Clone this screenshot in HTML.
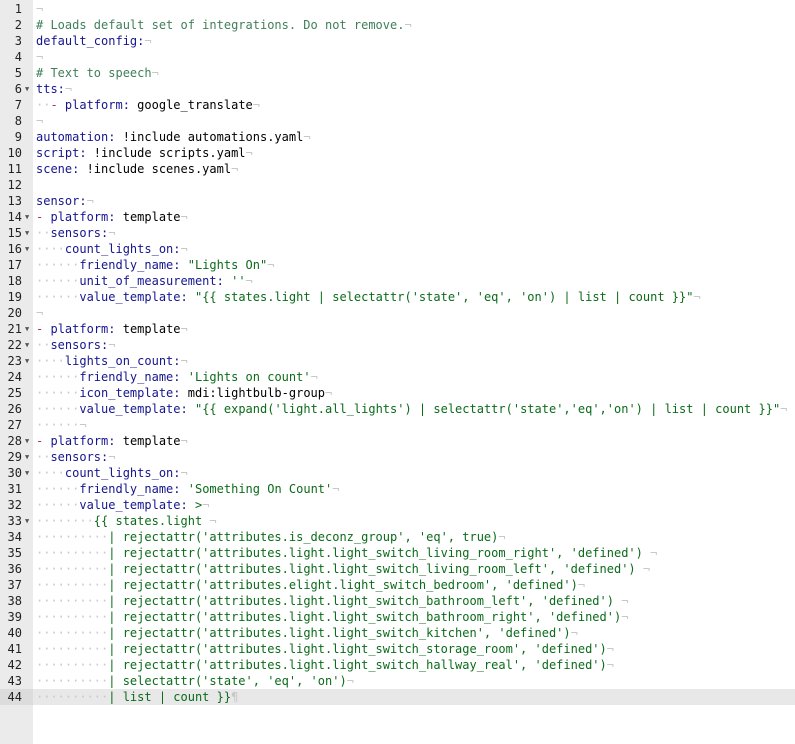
<!DOCTYPE html>
<html><head><meta charset="utf-8"><style>
body{margin:0;width:795px;height:744px;background:#fff;overflow:hidden;position:relative;font-family:"DejaVu Sans Mono",monospace;font-size:12px}
#g{position:absolute;left:0;top:0;width:33px;height:744px;background:#ebebeb}
.ln{position:absolute;left:0;width:33px;height:16px;line-height:16px;color:#222;font:12px/16px "DejaVu Sans Mono",monospace}
.ln span{position:absolute;right:11px}
.ln i{position:absolute;left:25px;top:0;font-style:normal;font-size:7px;color:#555}
#act{position:absolute;left:0;top:689px;width:795px;height:16px;background:#e8e8e8}
#actg{position:absolute;left:0;top:689px;width:33px;height:16px;background:#dcdcdc}
pre{position:absolute;left:36px;top:1px;margin:0;font:12px/16px "DejaVu Sans Mono",monospace;color:#000}
.k{color:#15158f}.c{color:#3f7f5a}.s{color:#0b6b1a}.m{color:#c0207a}.d{color:#c8c8c8}
</style></head><body>
<div id="g"></div><div id="act"></div><div id="actg"></div>
<pre><span class="d">¬</span>
<span class="c"># Loads default set of integrations. Do not remove.</span><span class="d">¬</span>
<span class="k">default_config:</span><span class="d">¬</span>
<span class="d">¬</span>
<span class="c"># Text to speech</span><span class="d">¬</span>
<span class="k">tts:</span><span class="d">¬</span>
<span class="d">··</span><span class="m">-</span> <span class="k">platform:</span> google_translate<span class="d">¬</span>
<span class="d">¬</span>
<span class="k">automation:</span> !include automations.yaml<span class="d">¬</span>
<span class="k">script:</span> !include scripts.yaml<span class="d">¬</span>
<span class="k">scene:</span> !include scenes.yaml<span class="d">¬</span>

<span class="k">sensor:</span><span class="d">¬</span>
<span class="m">-</span> <span class="k">platform:</span> template<span class="d">¬</span>
<span class="d">··</span><span class="k">sensors:</span><span class="d">¬</span>
<span class="d">····</span><span class="k">count_lights_on:</span><span class="d">¬</span>
<span class="d">······</span><span class="k">friendly_name:</span> <span class="s">"Lights On"</span><span class="d">¬</span>
<span class="d">······</span><span class="k">unit_of_measurement:</span> <span class="s">''</span><span class="d">¬</span>
<span class="d">······</span><span class="k">value_template:</span> <span class="s">"{{ states.light | selectattr('state', 'eq', 'on') | list | count }}"</span><span class="d">¬</span>
<span class="d">¬</span>
<span class="m">-</span> <span class="k">platform:</span> template<span class="d">¬</span>
<span class="d">··</span><span class="k">sensors:</span><span class="d">¬</span>
<span class="d">····</span><span class="k">lights_on_count:</span><span class="d">¬</span>
<span class="d">······</span><span class="k">friendly_name:</span> <span class="s">'Lights on count'</span><span class="d">¬</span>
<span class="d">······</span><span class="k">icon_template:</span> mdi:lightbulb-group<span class="d">¬</span>
<span class="d">······</span><span class="k">value_template:</span> <span class="s">"{{ expand('light.all_lights') | selectattr('state','eq','on') | list | count }}"</span><span class="d">¬</span>
<span class="d">······¬</span>
<span class="m">-</span> <span class="k">platform:</span> template<span class="d">¬</span>
<span class="d">··</span><span class="k">sensors:</span><span class="d">¬</span>
<span class="d">····</span><span class="k">count_lights_on:</span><span class="d">¬</span>
<span class="d">······</span><span class="k">friendly_name:</span> <span class="s">'Something On Count'</span><span class="d">¬</span>
<span class="d">······</span><span class="k">value_template:</span> <span class="s">&gt;</span><span class="d">¬</span>
<span class="d">········</span><span class="s">{{ states.light</span> <span class="d">¬</span>
<span class="d">··········</span><span class="s">| rejectattr('attributes.is_deconz_group', 'eq', true)</span><span class="d">¬</span>
<span class="d">··········</span><span class="s">| rejectattr('attributes.light.light_switch_living_room_right', 'defined')</span> <span class="d">¬</span>
<span class="d">··········</span><span class="s">| rejectattr('attributes.light.light_switch_living_room_left', 'defined')</span> <span class="d">¬</span>
<span class="d">··········</span><span class="s">| rejectattr('attributes.elight.light_switch_bedroom', 'defined')</span><span class="d">¬</span>
<span class="d">··········</span><span class="s">| rejectattr('attributes.light.light_switch_bathroom_left', 'defined')</span> <span class="d">¬</span>
<span class="d">··········</span><span class="s">| rejectattr('attributes.light.light_switch_bathroom_right', 'defined')</span><span class="d">¬</span>
<span class="d">··········</span><span class="s">| rejectattr('attributes.light.light_switch_kitchen', 'defined')</span><span class="d">¬</span>
<span class="d">··········</span><span class="s">| rejectattr('attributes.light.light_switch_storage_room', 'defined')</span><span class="d">¬</span>
<span class="d">··········</span><span class="s">| rejectattr('attributes.light.light_switch_hallway_real', 'defined')</span><span class="d">¬</span>
<span class="d">··········</span><span class="s">| selectattr('state', 'eq', 'on')</span><span class="d">¬</span>
<span class="d">··········</span><span class="s">| list | count }}</span><span class="d">¶</span></pre>
<div style="position:absolute;left:0;top:1px">
<div class="ln" style="top:0"><span>1</span></div>
<div class="ln" style="top:16px"><span>2</span></div>
<div class="ln" style="top:32px"><span>3</span></div>
<div class="ln" style="top:48px"><span>4</span></div>
<div class="ln" style="top:64px"><span>5</span></div>
<div class="ln" style="top:80px"><span>6</span><i>▼</i></div>
<div class="ln" style="top:96px"><span>7</span></div>
<div class="ln" style="top:112px"><span>8</span></div>
<div class="ln" style="top:128px"><span>9</span></div>
<div class="ln" style="top:144px"><span>10</span></div>
<div class="ln" style="top:160px"><span>11</span></div>
<div class="ln" style="top:176px"><span>12</span></div>
<div class="ln" style="top:192px"><span>13</span></div>
<div class="ln" style="top:208px"><span>14</span><i>▼</i></div>
<div class="ln" style="top:224px"><span>15</span><i>▼</i></div>
<div class="ln" style="top:240px"><span>16</span><i>▼</i></div>
<div class="ln" style="top:256px"><span>17</span></div>
<div class="ln" style="top:272px"><span>18</span></div>
<div class="ln" style="top:288px"><span>19</span></div>
<div class="ln" style="top:304px"><span>20</span></div>
<div class="ln" style="top:320px"><span>21</span><i>▼</i></div>
<div class="ln" style="top:336px"><span>22</span><i>▼</i></div>
<div class="ln" style="top:352px"><span>23</span><i>▼</i></div>
<div class="ln" style="top:368px"><span>24</span></div>
<div class="ln" style="top:384px"><span>25</span></div>
<div class="ln" style="top:400px"><span>26</span></div>
<div class="ln" style="top:416px"><span>27</span></div>
<div class="ln" style="top:432px"><span>28</span><i>▼</i></div>
<div class="ln" style="top:448px"><span>29</span><i>▼</i></div>
<div class="ln" style="top:464px"><span>30</span><i>▼</i></div>
<div class="ln" style="top:480px"><span>31</span></div>
<div class="ln" style="top:496px"><span>32</span></div>
<div class="ln" style="top:512px"><span>33</span><i>▼</i></div>
<div class="ln" style="top:528px"><span>34</span></div>
<div class="ln" style="top:544px"><span>35</span></div>
<div class="ln" style="top:560px"><span>36</span></div>
<div class="ln" style="top:576px"><span>37</span></div>
<div class="ln" style="top:592px"><span>38</span></div>
<div class="ln" style="top:608px"><span>39</span></div>
<div class="ln" style="top:624px"><span>40</span></div>
<div class="ln" style="top:640px"><span>41</span></div>
<div class="ln" style="top:656px"><span>42</span></div>
<div class="ln" style="top:672px"><span>43</span></div>
<div class="ln" style="top:688px"><span>44</span></div>
</div>
</body></html>
